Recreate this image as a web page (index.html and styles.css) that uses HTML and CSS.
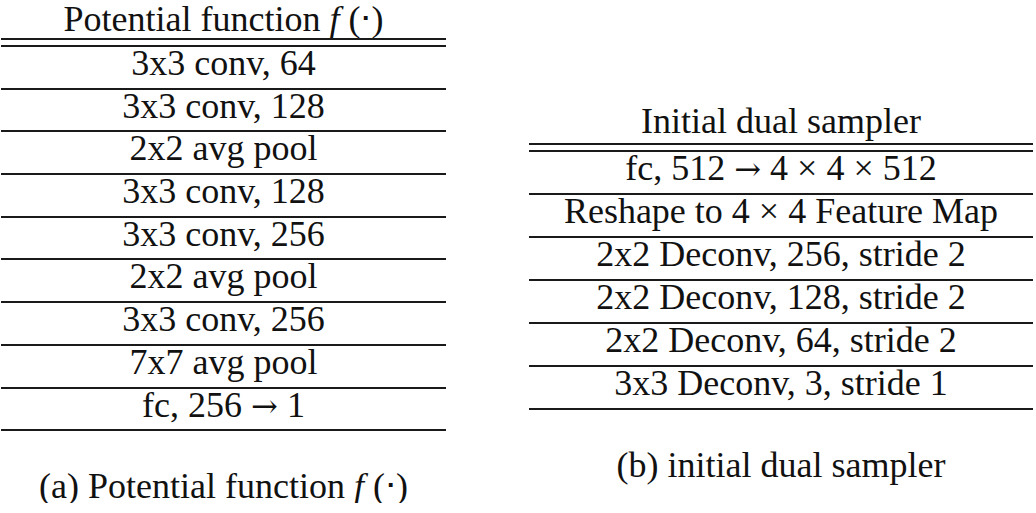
FILE: index.html
```html
<!DOCTYPE html>
<html>
<head>
<meta charset="utf-8">
<link rel="stylesheet" href="styles.css">
</head>
<body>
<div class="page">
  <div class="fig fig-a">
    <div class="tbl">
      <div class="head">Potential function <span class="m">f</span>&#8197;(&#8901;)</div>
      <div class="dbl"></div>
      <div class="row">3x3 conv, 64</div>
      <div class="row">3x3 conv, 128</div>
      <div class="row">2x2 avg pool</div>
      <div class="row">3x3 conv, 128</div>
      <div class="row">3x3 conv, 256</div>
      <div class="row">2x2 avg pool</div>
      <div class="row">3x3 conv, 256</div>
      <div class="row">7x7 avg pool</div>
      <div class="row">fc, 256 <span class="ar">&#8594;</span> 1</div>
    </div>
    <div class="cap">(a) Potential function <span class="m">f</span>&#8197;(&#8901;)</div>
  </div>
  <div class="fig fig-b">
    <div class="tbl">
      <div class="head head-b">Initial dual sampler</div>
      <div class="dbl"></div>
      <div class="row row-b">fc, 512 <span class="ar">&#8594;</span> 4 &#215; 4 &#215; 512</div>
      <div class="row row-b">Reshape to 4 &#215; 4 Feature Map</div>
      <div class="row row-b">2x2 Deconv, 256, stride 2</div>
      <div class="row row-b">2x2 Deconv, 128, stride 2</div>
      <div class="row row-b">2x2 Deconv, 64, stride 2</div>
      <div class="row row-b">3x3 Deconv, 3, stride 1</div>
    </div>
    <div class="cap">(b) initial dual sampler</div>
  </div>
</div>
</body>
</html>
```

FILE: styles.css
```css
html, body {
  margin: 0;
  padding: 0;
  background: #ffffff;
}
.page {
  font-family: "Liberation Serif", serif;
  font-size: 36px;
  color: #111111;
  display: flex;
  align-items: flex-start;
  padding-left: 1px;
  gap: 83px;
}
.fig {
  display: flex;
  flex-direction: column;
}
.fig-a {
  width: 445px;
}
.fig-b {
  width: 504px;
  margin-top: 105px;
}
.tbl {
  display: flex;
  flex-direction: column;
}
.head {
  text-align: center;
  line-height: 38px;
  height: 38px;
  white-space: nowrap;
}
.head-b {
  line-height: 33px;
  height: 33px;
  padding-bottom: 5px;
}
.dbl {
  height: 5px;
  border-top: 2px solid #1a1a1a;
  border-bottom: 2px solid #1a1a1a;
}
.row {
  text-align: center;
  line-height: 33px;
  height: 33px;
  padding-bottom: 7.7px;
  border-bottom: 2px solid #1a1a1a;
  white-space: nowrap;
}
.row-b {
  padding-bottom: 8px;
}
.cap {
  text-align: center;
  line-height: 33px;
  margin-top: 39px;
  white-space: nowrap;
}
.m {
  font-style: italic;
}
.ar {
  font-family: "DejaVu Serif", serif;
  font-size: 32px;
}
```
